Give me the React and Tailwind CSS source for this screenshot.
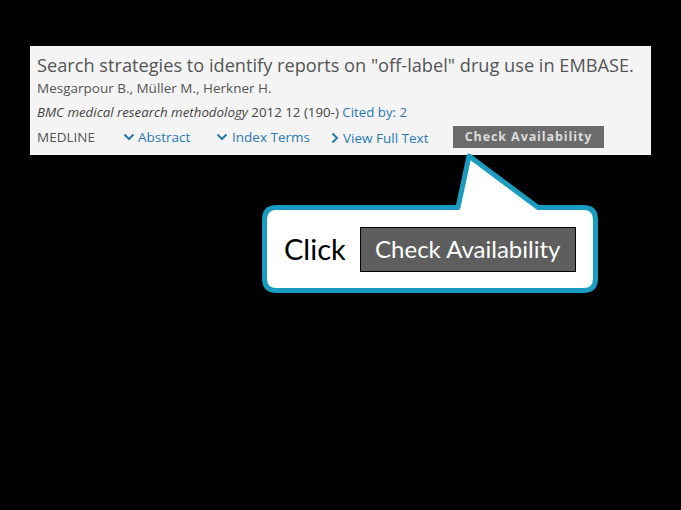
export default function App() {
  return (
    <div className="relative w-[681px] h-[510px] bg-black overflow-hidden" style={{ fontFamily: '"Open Sans", sans-serif' }}>
      <div className="absolute left-[30px] top-[46px] w-[621px] h-[109px] bg-[#f4f4f4] pl-[7px] pt-[7px] text-[#555]">
        <div className="text-[18.2px] leading-[24px] text-[#555] whitespace-nowrap">
          Search strategies to identify reports on "off-label" drug use in EMBASE.
        </div>
        <div className="text-[13.5px] leading-[18px] mt-[2px] text-[#555]">Mesgarpour B., Müller M., Herkner H.</div>
        <div className="text-[13.3px] leading-[18px] mt-[6px] text-[#444] whitespace-nowrap">
          <span className="italic">BMC medical research methodology</span> 2012 12 (190-){' '}
          <span className="text-[#2a78b0]">Cited by: 2</span>
        </div>
        <div className="flex items-center text-[13.5px] leading-[18px] mt-[5px] h-[22px] whitespace-nowrap">
          <span className="text-[#555] w-[86px]">MEDLINE</span>
          <span className="flex items-center text-[#2a78b0] w-[93px]">
            <svg width="12" height="8" viewBox="0 0 12 8" className="mr-[3px]"><path d="M1.5 1.5 L6 6 L10.5 1.5" fill="none" stroke="#2a78b0" strokeWidth="2" /></svg>
            Abstract
          </span>
          <span className="flex items-center text-[#2a78b0] w-[115px]">
            <svg width="12" height="8" viewBox="0 0 12 8" className="mr-[4px]"><path d="M1.5 1.5 L6 6 L10.5 1.5" fill="none" stroke="#2a78b0" strokeWidth="2" /></svg>
            Index Terms
          </span>
          <span className="flex items-center text-[#2a78b0] w-[122px] pt-[2px]">
            <svg width="8" height="12" viewBox="0 0 8 12" className="mr-[4px]"><path d="M1.5 1.5 L6 6 L1.5 10.5" fill="none" stroke="#2a78b0" strokeWidth="2" /></svg>
            View Full Text
          </span>
          <span className="bg-[#6b6b6b] text-[#dcdcdc] font-bold text-[12.5px] tracking-[0.9px] w-[151px] h-[22px] flex items-center justify-center">
            Check Availability
          </span>
        </div>
      </div>

      <svg className="absolute left-[255px] top-[145px]" width="350" height="155" viewBox="0 0 350 155">
        <path
          d="M21.5 62.5 H203 L214 11 L283 62.5 H328.5 Q340.5 62.5 340.5 74.5 V133.5 Q340.5 145.5 328.5 145.5 H21.5 Q9.5 145.5 9.5 133.5 V74.5 Q9.5 62.5 21.5 62.5 Z"
          fill="#fff"
          stroke="#1a9bc0"
          strokeWidth="5"
          strokeLinejoin="round"
        />
      </svg>
      <div className="absolute left-[262px] top-[205px] w-[336px] h-[88px] flex items-center pl-[22px]" style={{ fontFamily: 'Lato, "Noto Sans", sans-serif' }}>
        <span className="text-[29px] text-black mr-[14px]">Click</span>
        <span className="w-[216px] h-[45px] bg-[#5e5e5e] border border-black text-white text-[24px] flex items-center justify-center">
          Check Availability
        </span>
      </div>
    </div>
  );
}
